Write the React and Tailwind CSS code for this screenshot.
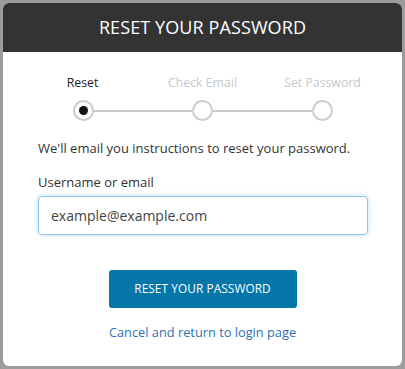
export default function App() {
  const steps = [
    { label: "Reset", active: true },
    { label: "Check Email", active: false },
    { label: "Set Password", active: false },
  ];

  return (
    <div
      className="w-[405px] h-[369px] bg-[#9c9c9c] p-[3px]"
      style={{ fontFamily: '"Open Sans", "Liberation Sans", sans-serif' }}
    >
      <div className="h-full bg-white rounded-[6px] overflow-hidden flex flex-col">
        {/* Header */}
        <div className="h-[49px] bg-[#333333] flex items-center justify-center">
          <h1 className="text-white text-[18px] tracking-[0.1px]">RESET YOUR PASSWORD</h1>
        </div>

        {/* Steps */}
        <div className="w-[360px] mx-auto mt-[22px]">
          <div className="grid grid-cols-3 text-[12.3px] leading-[18px] text-center">
            {steps.map((s) => (
              <span key={s.label} className={s.active ? "text-[#222]" : "text-[#c8c8c8]"}>
                {s.label}
              </span>
            ))}
          </div>
          <div className="flex items-center px-[50px] mt-[8px]">
            <Circle active />
            <div className="flex-1 h-[2px] bg-[#cccccc]" />
            <Circle />
            <div className="flex-1 h-[2px] bg-[#cccccc]" />
            <Circle />
          </div>
        </div>

        {/* Form */}
        <div className="px-[35px] mt-[17px]">
          <p className="text-[13px] leading-[20px] text-[#333]">
            We'll email you instructions to reset your password.
          </p>
          <label className="block text-[13px] leading-[20px] text-[#333] mt-[14px]">
            Username or email
          </label>
          <input
            defaultValue="example@example.com"
            className="mt-[4px] w-[330px] h-[39px] rounded-[4px] border border-[#8cc4ee] px-[12px] text-[14px] text-[#444] outline-none shadow-[0_0_5px_rgba(102,175,233,0.45)]"
            style={{ fontFamily: '"Open Sans", "Liberation Sans", sans-serif' }}
          />
        </div>

        <div className="flex flex-col items-center mt-[35px]">
          <button className="w-[188px] h-[38px] rounded-[3px] bg-[#0576a8] text-white text-[11.8px] tracking-[0.1px]">
            RESET YOUR PASSWORD
          </button>
          <a href="#" className="mt-[15px] text-[12.8px] text-[#2f72b5]">
            Cancel and return to login page
          </a>
        </div>
      </div>
    </div>
  );
}

function Circle({ active }) {
  return (
    <div className="w-[21px] h-[21px] rounded-full border-2 border-[#cccccc] bg-white flex items-center justify-center shrink-0">
      {active && <div className="w-[9px] h-[9px] rounded-full bg-[#111]" />}
    </div>
  );
}
